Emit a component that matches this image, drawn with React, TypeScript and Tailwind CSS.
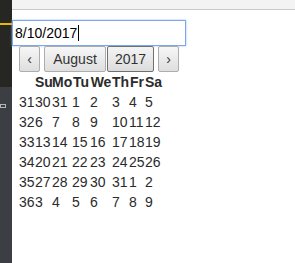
import React from "react";

const weeks: { n: number; days: number[] }[] = [
  { n: 31, days: [30, 31, 1, 2, 3, 4, 5] },
  { n: 32, days: [6, 7, 8, 9, 10, 11, 12] },
  { n: 33, days: [13, 14, 15, 16, 17, 18, 19] },
  { n: 34, days: [20, 21, 22, 23, 24, 25, 26] },
  { n: 35, days: [27, 28, 29, 30, 31, 1, 2] },
  { n: 36, days: [3, 4, 5, 6, 7, 8, 9] },
];

const heads = ["Su", "Mo", "Tu", "We", "Th", "Fr", "Sa"];

export default function App() {
  return (
    <div className="flex h-[263px] w-[295px] overflow-hidden bg-white font-['Liberation_Sans',Arial,sans-serif] text-[14px] text-[#2b2b2b]">
      <div className="flex w-[12px] shrink-0 flex-col">
        <div className="h-[87px] bg-[#262622] pt-[23px]">
          <div className="h-[2px] bg-[#e6b800]" />
        </div>
        <div className="flex-1 bg-[#3b3e42] pt-[17px]">
          <div className="h-[4px] w-[6px] border border-[#b5b5b5]" />
        </div>
      </div>
      <div className="flex min-w-0 flex-1 flex-col">
        <div className="h-[10px] border-b border-[#cacaca] bg-[#f3f3f3]" />
        <div className="pt-[10px]">
          <div className="flex h-[26px] w-[174px] items-center border border-[#7ea6ee] pl-[2px] text-black shadow-[0_0_2px_#9fbef5]">
            <span>8/10/2017</span>
            <span className="ml-[1px] h-[16px] w-[1px] bg-black" />
          </div>
        </div>
        <div className="pl-[7px]">
          <div className="flex h-[26px] items-stretch">
            <button className="w-[21px] rounded-[2px] border border-[#adadad] bg-gradient-to-b from-[#f7f7f7] to-[#dedede] text-[14px] text-[#333]">
              ‹
            </button>
            <button className="ml-[4px] w-[62px] rounded-[2px] border border-[#adadad] bg-gradient-to-b from-[#f7f7f7] to-[#dedede] text-[14px] text-[#333]">
              August
            </button>
            <button className="ml-[1px] w-[47px] rounded-[2px] border border-[#707070] bg-gradient-to-b from-[#f4f4f4] to-[#dcdcdc] text-[14px] text-[#333]">
              2017
            </button>
            <button className="ml-[4px] w-[21px] rounded-[2px] border border-[#adadad] bg-gradient-to-b from-[#f7f7f7] to-[#dedede] text-[14px] text-[#333]">
              ›
            </button>
          </div>
          <table className="w-[143px] table-fixed border-collapse">
            <colgroup>
              <col className="w-[16px]" />
              <col className="w-[17px]" />
              <col className="w-[20px]" />
              <col className="w-[18px]" />
              <col className="w-[22px]" />
              <col className="w-[17px]" />
              <col className="w-[16px]" />
              <col className="w-[17px]" />
            </colgroup>
            <thead>
              <tr className="h-[20px] leading-[20px]">
                <th className="p-0" />
                {heads.map((h) => (
                  <th key={h} className="overflow-visible whitespace-nowrap p-0 text-center font-bold">
                    {h}
                  </th>
                ))}
              </tr>
            </thead>
            <tbody>
              {weeks.map((w) => (
                <tr key={w.n} className="h-[20px] leading-[20px]">
                  <td className="whitespace-nowrap p-0 text-left">{w.n}</td>
                  {w.days.map((d, i) => (
                    <td key={i} className="whitespace-nowrap p-0 text-left">
                      {d}
                    </td>
                  ))}
                </tr>
              ))}
            </tbody>
          </table>
        </div>
      </div>
    </div>
  );
}
